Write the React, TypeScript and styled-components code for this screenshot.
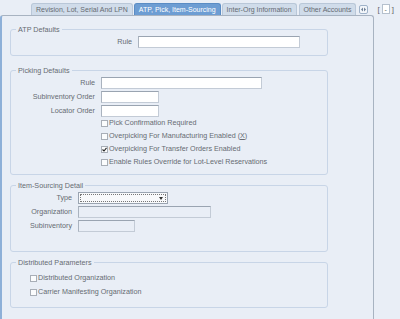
import styled, { createGlobalStyle } from "styled-components";

const Global = createGlobalStyle`
  html, body {
    margin: 0;
    padding: 0;
    background: #e9eef6;
  }
  body {
    font-family: "Liberation Sans", Arial, sans-serif;
    font-size: 7.2px;
    color: #666b72;
  }
`;

const Page = styled.div`
  width: 400px;
  height: 319px;
  overflow: hidden;
  display: flex;
  flex-direction: column;
`;

const TabBar = styled.div`
  display: flex;
  align-items: flex-end;
  height: 15px;
  padding-left: 31px;
  box-sizing: border-box;
`;

const Tab = styled.div<{ $active?: boolean; $gap?: number }>`
  flex-shrink: 0;
  height: 12px;
  box-sizing: border-box;
  padding: 0 4px;
  margin-right: ${(p) => p.$gap ?? 1}px;
  display: flex;
  align-items: center;
  border: 1px solid ${(p) => (p.$active ? "#5a8cc4" : "#b9c7d8")};
  border-bottom: none;
  border-radius: 3px 3px 0 0;
  background: ${(p) => (p.$active ? "#6d9dd3" : "#d0dcea")};
  color: ${(p) => (p.$active ? "#ffffff" : "#666b72")};
  white-space: nowrap;
  font-size: 7px;
`;

const ScrollButton = styled.div`
  flex-shrink: 0;
  margin-left: 2px;
  margin-bottom: 1px;
  width: 9px;
  height: 9px;
  box-sizing: border-box;
  border: 1px solid #9fb2c9;
  border-radius: 2px;
  background: #f3f6fa;
  display: flex;
  align-items: center;
  justify-content: center;
`;

const Pager = styled.div`
  flex-shrink: 0;
  margin-left: 9px;
  display: flex;
  align-items: center;
  gap: 2px;
  height: 12px;
  color: #666;
  font-size: 8px;
`;

const PagerBox = styled.div`
  width: 8px;
  height: 10px;
  box-sizing: border-box;
  border: 1px solid #b5c0cd;
  background: #fff;
  display: flex;
  align-items: center;
  justify-content: center;
  font-size: 7px;
`;

const Body = styled.div`
  flex: 1;
  display: flex;
`;

const Panel = styled.div`
  width: 374px;
  box-sizing: border-box;
  border: 1px solid #a8b3c1;
  border-left: 2px solid #8eb0d8;
  border-bottom: none;
  border-radius: 3px 3px 0 0;
  padding: 9px 0 0 8px;
  display: flex;
  flex-direction: column;
`;

const Group = styled.fieldset<{ $pb: number; $mt?: number }>`
  margin: ${(p) => p.$mt ?? 0}px 0 0 0;
  width: 318px;
  box-sizing: border-box;
  border: 1px solid #c8d5e7;
  border-radius: 3px;
  padding: 2px 0 ${(p) => p.$pb}px 0;
  min-width: 0;
`;

const Legend = styled.legend`
  padding: 0 2px;
  margin-left: 5px;
  line-height: 9px;
  color: #666b72;
`;

const Rows = styled.div<{ $label: number }>`
  display: grid;
  grid-template-columns: ${(p) => p.$label}px auto;
  column-gap: 6px;
  row-gap: 2px;
  align-items: center;
`;

const Label = styled.div`
  text-align: right;
  line-height: 12px;
  white-space: nowrap;
`;

const Input = styled.div<{ $w: number; $disabled?: boolean }>`
  width: ${(p) => p.$w}px;
  height: 12px;
  box-sizing: border-box;
  background: ${(p) => (p.$disabled ? "#e9eef6" : "#ffffff")};
  border: 1px solid #c3cbd6;
  border-top-color: #9aa4b1;
  border-left-color: #aab3bf;
`;

const Select = styled.div`
  width: 90px;
  height: 12px;
  box-sizing: border-box;
  background: #f8f9fb;
  border: 1px solid #9aa4b1;
  padding: 1px;
  display: flex;
  align-items: stretch;
`;

const SelectFocus = styled.div`
  flex: 1;
  border: 1px dotted #777;
  display: flex;
  align-items: center;
  justify-content: flex-end;
  padding-right: 2px;
`;

const Checks = styled.div<{ $indent: number; $gap: number; $top?: number }>`
  display: flex;
  flex-direction: column;
  gap: ${(p) => p.$gap}px;
  padding: ${(p) => p.$top ?? 0}px 0 0 ${(p) => p.$indent}px;
`;

const CheckRow = styled.div`
  display: flex;
  align-items: center;
  gap: 1px;
  line-height: 10px;
  white-space: nowrap;
`;

const Box = styled.div`
  width: 7px;
  height: 7px;
  box-sizing: border-box;
  border: 1px solid #a8aeb7;
  background: #fbfcfd;
  display: flex;
  align-items: center;
  justify-content: center;
`;

const Mnemonic = styled.span`
  text-decoration: underline;
`;

const Check = ({ label, checked }: { label: React.ReactNode; checked?: boolean }) => (
  <CheckRow>
    <Box>
      {checked && (
        <svg width="5" height="5" viewBox="0 0 5 5">
          <path d="M0.5 2.5 L2 4 L4.5 0.8" stroke="#222" strokeWidth="1.1" fill="none" />
        </svg>
      )}
    </Box>
    {label}
  </CheckRow>
);

export default function App() {
  return (
    <Page>
      <Global />
      <TabBar>
        <Tab>Revision, Lot, Serial And LPN</Tab>
        <Tab $active>ATP, Pick, Item-Sourcing</Tab>
        <Tab $gap={2}>Inter-Org Information</Tab>
        <Tab>Other Accounts</Tab>
        <ScrollButton>
          <svg width="5" height="5" viewBox="0 0 5 5">
            <path d="M0 2.5 L2 0.5 L2 4.5 Z M5 2.5 L3 0.5 L3 4.5 Z" fill="#6d7f96" />
          </svg>
        </ScrollButton>
        <Pager>
          <span>[</span>
          <PagerBox>-</PagerBox>
          <span>]</span>
        </Pager>
      </TabBar>
      <Body>
        <Panel>
          <Group $pb={7}>
            <Legend>ATP Defaults</Legend>
            <Rows $label={121}>
              <Label>Rule</Label>
              <Input $w={162} />
            </Rows>
          </Group>

          <Group $pb={7} $mt={10}>
            <Legend>Picking Defaults</Legend>
            <Rows $label={84}>
              <Label>Rule</Label>
              <Input $w={161} />
              <Label>Subinventory Order</Label>
              <Input $w={58} />
              <Label>Locator Order</Label>
              <Input $w={58} />
            </Rows>
            <Checks $indent={90} $gap={3} $top={1}>
              <Check label="Pick Confirmation Required" />
              <Check
                label={
                  <span>
                    Overpicking For Manufacturing Enabled (<Mnemonic>X</Mnemonic>)
                  </span>
                }
              />
              <Check label="Overpicking For Transfer Orders Enabled" checked />
              <Check label="Enable Rules Override for Lot-Level Reservations" />
            </Checks>
          </Group>

          <Group $pb={19} $mt={6}>
            <Legend>Item-Sourcing Detail</Legend>
            <Rows $label={61}>
              <Label>Type</Label>
              <Select>
                <SelectFocus>
                  <svg width="4" height="3" viewBox="0 0 4 3">
                    <path d="M0 0 L4 0 L2 3 Z" fill="#333" />
                  </svg>
                </SelectFocus>
              </Select>
              <Label>Organization</Label>
              <Input $w={133} $disabled />
              <Label>Subinventory</Label>
              <Input $w={57} $disabled />
            </Rows>
          </Group>

          <Group $pb={10} $mt={6}>
            <Legend>Distributed Parameters</Legend>
            <Checks $indent={19} $gap={4} $top={4}>
              <Check label="Distributed Organization" />
              <Check label="Carrier Manifesting Organization" />
            </Checks>
          </Group>
        </Panel>
      </Body>
    </Page>
  );
}
